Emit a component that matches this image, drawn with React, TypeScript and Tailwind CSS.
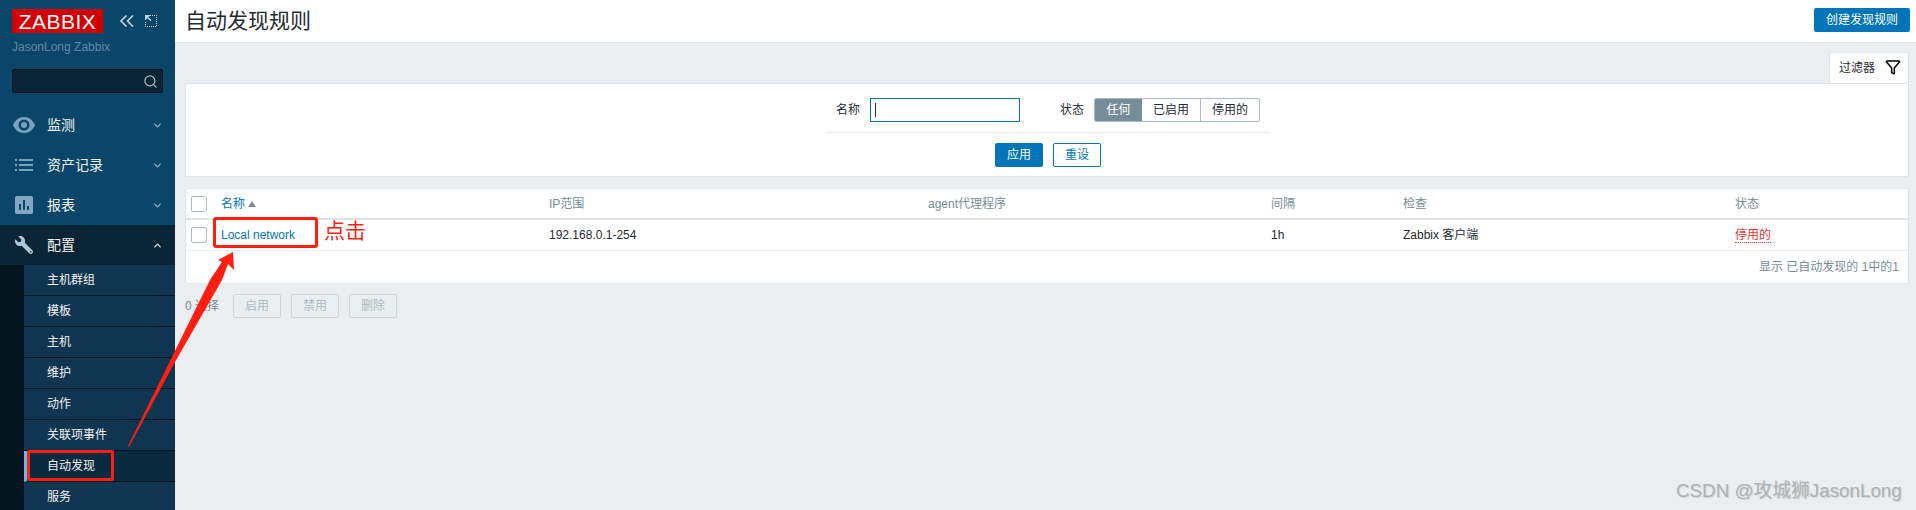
import React from 'react';
import { ChevronDown, ChevronUp, Search, Funnel } from 'lucide-react';
import { FaWrench } from 'react-icons/fa';

const subItems = ['主机群组', '模板', '主机', '维护', '动作', '关联项事件', '自动发现', '服务'];

const EyeIcon = () => (
  <svg width="22" height="16" viewBox="0 0 22 16" fill="#7ba3bd">
    <path fillRule="evenodd" d="M11 0C6 0 2.200 3 0 8c2.200 5 6 8 11 8s8.800-3 11-8c-2.200-5-6-8-11-8Zm0 2.500a5.500 5.500 0 1 1 0 11 5.500 5.500 0 0 1 0-11Z" />
    <circle cx="11" cy="8" r="3" />
  </svg>
);

const ListIcon = () => (
  <svg width="18" height="12" viewBox="0 0 18 12" fill="#7ba3bd">
    <rect x="0" y="0" width="2" height="2" />
    <rect x="0" y="5" width="2" height="2" />
    <rect x="0" y="10" width="2" height="2" />
    <rect x="4" y="0" width="14" height="2" />
    <rect x="4" y="5" width="14" height="2" />
    <rect x="4" y="10" width="14" height="2" />
  </svg>
);

const ChartIcon = () => (
  <svg width="18" height="18" viewBox="0 0 18 18">
    <rect width="18" height="18" rx="2" fill="#82a8c4" />
    <rect x="4" y="8" width="2" height="6" fill="#0a466a" />
    <rect x="8" y="4" width="2" height="10" fill="#0a466a" />
    <rect x="12" y="10" width="2" height="4" fill="#0a466a" />
  </svg>
);

const MenuRow = ({ icon, label, open }: { icon: React.ReactNode; label: string; open?: boolean }) => (
  <div className={`flex h-10 items-center ${open ? 'bg-[#0a2536]' : ''}`}>
    <div className="flex w-[47px] shrink-0 justify-center pl-[1px]">{icon}</div>
    <span className="flex-1 text-sm text-[#f2f2f2]">{label}</span>
    {open ? (
      <ChevronUp size={11} strokeWidth={3} className="mr-[12px] text-[#d5e0e7]" />
    ) : (
      <ChevronDown size={11} strokeWidth={2.5} className="mr-[12px] text-[#9dbacb]" />
    )}
  </div>
);

const Sidebar = () => (
  <aside className="flex h-[510px] w-[175px] shrink-0 flex-col overflow-hidden bg-[#0a466a]">
    <div className="flex shrink-0 items-center pl-3 pt-[9px]">
      <div className="flex h-6 w-[91px] items-center justify-center bg-[#d40000] text-[21px] leading-none tracking-[0.5px] text-white">
        ZABBIX
      </div>
      <svg width="14" height="12" viewBox="0 0 14 12" className="ml-[17px]" fill="none" stroke="#c3d5e0" strokeWidth="1.600">
        <path d="M6.500 .5 1 6l5.500 5.500M13 .5 7.500 6l5.500 5.500" />
      </svg>
      <svg width="12" height="12" viewBox="0 0 12 12" className="ml-[11px]" fill="none" stroke="#c3d5e0">
        <path d="M5 .5h6.500V11.500H.5V6" strokeDasharray="1 1" />
        <path d="M0 0h5.500L0 5.500Z" fill="#c3d5e0" stroke="none" />
        <path d="M2.500 2.500l3.500 3" strokeWidth="1.600" />
      </svg>
    </div>
    <div className="shrink-0 pl-3 pt-[7px] text-xs leading-[14px] text-[#5f8aa5]">JasonLong Zabbix</div>
    <div className="mx-3 mt-[15px] flex h-6 w-[151px] shrink-0 items-center justify-end rounded-[2px] border border-[#04151f] bg-[#0a2536] pr-[4px]">
      <Search size={15} strokeWidth={2} className="text-[#a9bac5]" />
    </div>
    <nav className="mt-3 shrink-0">
      <MenuRow icon={<EyeIcon />} label="监测" />
      <MenuRow icon={<ListIcon />} label="资产记录" />
      <MenuRow icon={<ChartIcon />} label="报表" />
      <MenuRow icon={<FaWrench size={18} color="#a9c8db" className="-scale-x-100" />} label="配置" open />
      <div className="bg-[#04151f] pl-6">
        {subItems.map(item => {
          const active = item === '自动发现';
          return (
            <div
              key={item}
              className={`flex h-[31px] items-center border-b border-[#04151f] pl-[23px] text-xs ${
                active ? 'border-l-[3px] border-l-[#6fb7e6] !pl-5 bg-[#0a2b3f] text-[#f2f2f2]' : 'bg-[#0f3551] text-[#f2f2f2]'
              }`}
            >
              {item}
            </div>
          );
        })}
      </div>
    </nav>
  </aside>
);

const FilterPanel = () => (
  <div className="mr-px">
    <div className="flex justify-end">
      <div className="flex h-[31px] w-[80px] items-center gap-[10px] rounded-t-[2px] border-x border-t border-[#dfe4e7] bg-white pl-[9px] text-xs text-[#1f2c33]">
        过滤器
        <Funnel size={16} strokeWidth={2.25} className="-mt-[2px] text-black" />
      </div>
    </div>
    <div className="h-[94px] border border-[#dfe4e7] bg-white pt-[14px] text-xs text-[#1f2c33]">
      <div className="ml-[640px] w-[444px] border-b border-[#ebeef0] pb-[10px]">
        <div className="flex h-6 items-center">
          <span className="ml-[10px] w-[34px]">名称</span>
          <div className="flex h-6 w-[150px] items-center border border-[#0275b8] pl-1">
            <div className="h-[14px] w-px bg-[#1f2c33]" />
          </div>
          <span className="ml-10 w-[34px]">状态</span>
          <div className="flex h-6 w-[166px] overflow-hidden rounded-[2px] border border-[#acbbc2]">
            <span className="flex w-[47px] items-center justify-center bg-[#768d99] text-white">任何</span>
            <span className="flex w-[59px] items-center justify-center border-r border-[#acbbc2]">已启用</span>
            <span className="flex flex-1 items-center justify-center">停用的</span>
          </div>
        </div>
      </div>
      <div className="mt-[10px] flex justify-center gap-[10px] pl-[2px]">
        <button className="h-6 w-12 rounded-[2px] bg-[#0275b8] text-white">应用</button>
        <button className="h-6 w-12 rounded-[2px] border border-[#0275b8] text-[#0275b8]">重设</button>
      </div>
    </div>
  </div>
);

const Checkbox = () => <div className="ml-[5px] h-4 w-4 rounded-[2px] border border-[#acbbc2] bg-white" />;

const RulesTable = () => (
  <div className="mr-px mt-[11px] border border-[#dfe4e7] bg-white text-xs">
    <div className="grid h-[31px] grid-cols-[35px_328px_379px_343px_132px_332px_1fr] items-center border-b-2 border-[#dfe4e7] text-[#768d99]">
      <Checkbox />
      <span className="flex items-center gap-[3px] text-[#0275b8]">
        名称
        <span className="h-0 w-0 border-x-[4px] border-b-[6px] border-x-transparent border-b-[#768d99]" />
      </span>
      <span>IP范围</span>
      <span>agent代理程序</span>
      <span>间隔</span>
      <span>检查</span>
      <span>状态</span>
    </div>
    <div className="grid h-[31px] grid-cols-[35px_328px_379px_343px_132px_332px_1fr] items-center border-b border-[#ebeef0] text-[#1f2c33]">
      <Checkbox />
      <span className="text-[#0275b8]">Local network</span>
      <span>192.168.0.1-254</span>
      <span />
      <span>1h</span>
      <span>Zabbix 客户端</span>
      <span>
        <span className="border-b border-dotted border-[#e33734] text-[#e33734]">停用的</span>
      </span>
    </div>
    <div className="flex h-8 items-center justify-end pr-[9px] text-[#768d99]">显示 已自动发现的 1中的1</div>
  </div>
);

const Actions = () => (
  <div className="mt-[10px] flex items-center text-xs text-[#768d99]">
    <span className="w-12">0 选择</span>
    {['启用', '禁用', '删除'].map(label => (
      <button
        key={label}
        className="mr-[10px] h-6 w-12 rounded-[2px] border border-[#ccd5d9] bg-[#ebeef0] text-[#acbbc2]"
      >
        {label}
      </button>
    ))}
  </div>
);

export default function App() {
  return (
    <div className="relative flex h-[510px] w-[1916px] overflow-hidden bg-[#ebeef0] font-['Liberation_Sans','Noto_Sans_CJK_SC',sans-serif]">
      <Sidebar />
      <main className="min-w-0 flex-1">
        <header className="flex h-[43px] items-center justify-between border-b border-[#dfe4e7] bg-white pl-[10px] pr-[6px]">
          <h1 className="text-[21px] font-normal text-[#1f2c33]">自动发现规则</h1>
          <button className="mb-[3px] h-6 w-[96px] rounded-[2px] bg-[#0275b8] text-xs text-white">创建发现规则</button>
        </header>
        <div className="pl-[10px] pr-[6px] pt-[9px]">
          <FilterPanel />
          <RulesTable />
          <Actions />
        </div>
      </main>

      {/* red annotations drawn over the screenshot */}
      <div className="absolute left-[213px] top-[217px] h-[31px] w-[105px] rounded-[3px] border-[3px] border-[#fe1f10]" />
      <div className="absolute left-[27px] top-[450px] h-[31px] w-[87px] rounded-[2px] border-[3px] border-[#fe1f10]" />
      <span className="absolute left-[324px] top-[219px] text-[21px] leading-[24px] text-[#fe1f10]">点击</span>
      <svg className="absolute left-0 top-0" width="300" height="510" viewBox="0 0 300 510">
        <polygon points="128,446 210,280 222,262 218,260 233,252 234,270 228,264 222,280 175,362 129,447" fill="#fe1f10" />
      </svg>

      <span className="absolute left-[1676px] top-[479px] text-[18.800px] leading-[24px] text-[#aeb2b5] [text-shadow:1px_1px_1px_#d0d0d0]">
        CSDN @攻城狮JasonLong
      </span>
    </div>
  );
}
